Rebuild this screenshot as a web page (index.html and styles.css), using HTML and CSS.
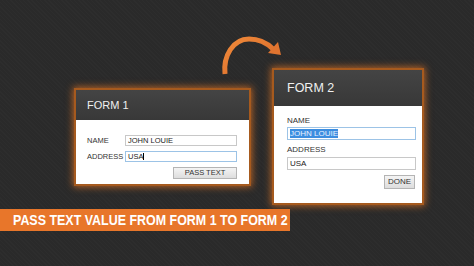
FILE: index.html
```html
<!DOCTYPE html>
<html lang="en">
<head>
    <meta charset="UTF-8">
    <meta name="viewport" content="width=device-width, initial-scale=1.0">
    <title>Pass text value</title>
    <link rel="stylesheet" href="styles.css">
</head>
<body>
    <div id="stage">
        <!-- curved arrow from form 1 to form 2 -->
        <svg class="arrow" width="75" height="50" viewBox="0 0 75 50">
            <defs>
                <linearGradient id="arrowFill" x1="0" y1="0" x2="1" y2="1">
                    <stop offset="0" stop-color="#f08a3a"/>
                    <stop offset="1" stop-color="#d8692a"/>
                </linearGradient>
            </defs>
            <path d="M10,44 C8,26 18,9 34,9 C44,9 52,13 58,19" fill="none" stroke="url(#arrowFill)" stroke-width="5" stroke-linecap="butt"/>
            <polygon points="66,25 53,23 63,12" fill="#e07430"/>
        </svg>

        <div id="row">
            <div class="box box1">
                <div class="box-head">FORM 1</div>
                <div class="box-body">
                    <div class="field">
                        <span class="label">NAME</span>
                        <div class="input">JOHN LOUIE</div>
                    </div>
                    <div class="field">
                        <span class="label">ADDRESS</span>
                        <div class="input focus">USA<span class="caret"></span></div>
                    </div>
                    <div class="actions">
                        <div class="btn btn-pass">PASS TEXT</div>
                    </div>
                </div>
            </div>

            <div class="box box2">
                <div class="box-head">FORM 2</div>
                <div class="box-body">
                    <span class="label">NAME</span>
                    <div class="input focus"><span class="sel">JOHN LOUIE</span></div>
                    <span class="label">ADDRESS</span>
                    <div class="input">USA</div>
                    <div class="actions">
                        <div class="btn btn-done">DONE</div>
                    </div>
                </div>
            </div>
        </div>

        <div id="banner"><span class="banner-text">PASS TEXT VALUE FROM FORM 1 TO FORM 2</span></div>
    </div>
</body>
</html>
```

FILE: styles.css
```css
html, body{
    margin: 0;
    padding: 0;
}
body{
    width: 474px;
    height: 266px;
    overflow: hidden;
    background-color: #2a2a2a;
    background-image: repeating-linear-gradient(45deg, rgba(255,255,255,0.015) 0 1px, transparent 1px 3px);
    font-family: "Liberation Sans", Arial, sans-serif;
}
#stage{
    position: relative;
    width: 474px;
    height: 266px;
}
.arrow{
    position: absolute;
    left: 215px;
    top: 30px;
}
#row{
    display: flex;
    align-items: flex-start;
    padding-left: 76px;
}
.box{
    background: #ffffff;
    box-shadow: 0 0 0 2px #a65a1e, 0 0 7px 3px rgba(226,116,36,0.75);
}
.box1{
    width: 173px;
    margin-top: 90px;
}
.box2{
    width: 148px;
    margin-top: 70px;
    margin-left: 25px;
}
.box-head{
    background: linear-gradient(#444444, #383838);
    color: #f0f0f0;
}
.box1 .box-head{
    height: 30px;
    line-height: 30px;
    padding-left: 11px;
    font-size: 11px;
}
.box2 .box-head{
    height: 36px;
    line-height: 36px;
    padding-left: 13px;
    font-size: 12.5px;
}
.label{
    font-size: 7.5px;
    color: #333333;
}
.input{
    box-sizing: border-box;
    border: 1px solid #c8c8c8;
    background: #ffffff;
    color: #222222;
    font-size: 7.5px;
    padding-left: 2px;
}
.input.focus{
    border-color: #9cc3e6;
}
.caret{
    display: inline-block;
    width: 1px;
    height: 7px;
    background: #000000;
    vertical-align: -1px;
}
.btn{
    box-sizing: border-box;
    border: 1px solid #b4b4b4;
    background: linear-gradient(#f4f4f4, #dddddd);
    color: #333333;
    font-size: 7.5px;
    text-align: center;
}
.actions{
    display: flex;
    justify-content: flex-end;
}

/* form 1 */
.box1 .box-body{
    padding: 15px 12px 5px 11px;
}
.box1 .field{
    display: flex;
    align-items: center;
    margin-bottom: 5px;
}
.box1 .label{
    width: 38px;
}
.box1 .input{
    width: 112px;
    height: 11px;
    line-height: 9px;
}
.btn-pass{
    width: 64px;
    height: 12px;
    line-height: 10px;
}

/* form 2 */
.box2 .box-body{
    display: flex;
    flex-direction: column;
    padding: 10px 6px 14px 13px;
}
.box2 .label{
    font-size: 8px;
    line-height: 10px;
    margin-bottom: 1px;
}
.box2 .input{
    width: 129px;
    height: 13px;
    line-height: 11px;
    font-size: 8px;
    margin-bottom: 5px;
}
.box2 .input + .label{
    margin-bottom: 2px;
}
.sel{
    background: #3d8ee0;
    color: #e8f2ff;
}
.btn-done{
    width: 31px;
    height: 14px;
    line-height: 12px;
    margin-right: 1px;
    font-size: 8px;
}

#banner{
    margin-top: 6px;
    width: 290px;
    height: 22px;
    box-sizing: border-box;
    padding-left: 13px;
    background: #e8762a;
    overflow: hidden;
}
.banner-text{
    display: inline-block;
    transform: scaleX(0.83);
    transform-origin: left center;
    color: #ffffff;
    font-weight: bold;
    font-size: 15px;
    line-height: 22px;
    white-space: nowrap;
}
```
